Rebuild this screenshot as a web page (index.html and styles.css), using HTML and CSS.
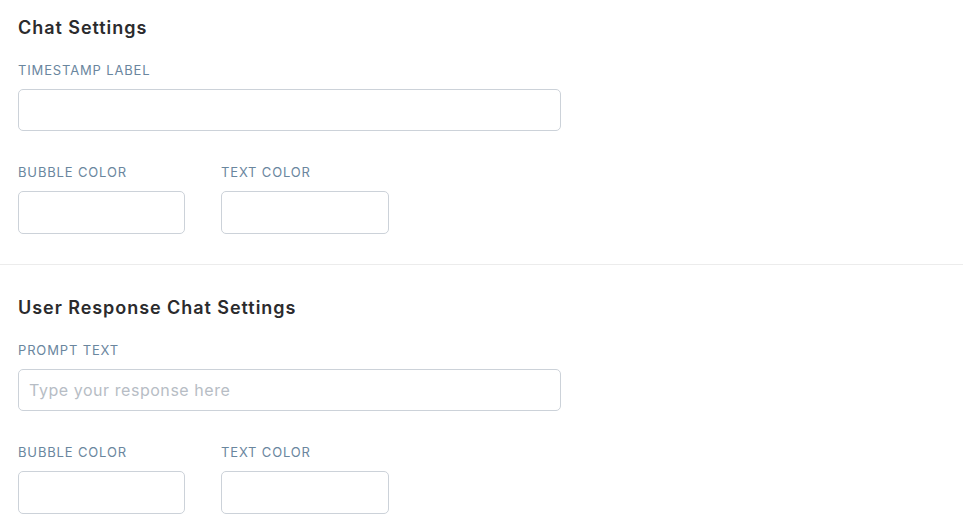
FILE: index.html
```html
<!DOCTYPE html>
<html lang="en">
<head>
    <meta charset="UTF-8">
    <meta name="viewport" content="width=device-width, initial-scale=1.0">
    <title>Chat Settings</title>
    <link rel="stylesheet" href="styles.css">
</head>
<body>
    <div class="settings-section">
        <h2>Chat Settings</h2>

        <div class="form-field">
            <label for="timestampLabel">Timestamp Label</label>
            <input type="text" id="timestampLabel" class="wide-input">
        </div>

        <div class="color-row">
            <div class="form-field">
                <label for="botBubbleColor">Bubble Color</label>
                <input type="text" id="botBubbleColor" class="color-input">
            </div>
            <div class="form-field">
                <label for="botTextColor">Text Color</label>
                <input type="text" id="botTextColor" class="color-input">
            </div>
        </div>
    </div>

    <div class="settings-section">
        <h2>User Response Chat Settings</h2>

        <div class="form-field">
            <label for="promptText">Prompt Text</label>
            <input type="text" id="promptText" class="wide-input" placeholder="Type your response here">
        </div>

        <div class="color-row">
            <div class="form-field">
                <label for="userBubbleColor">Bubble Color</label>
                <input type="text" id="userBubbleColor" class="color-input">
            </div>
            <div class="form-field">
                <label for="userTextColor">Text Color</label>
                <input type="text" id="userTextColor" class="color-input">
            </div>
        </div>
    </div>
</body>
</html>
```

FILE: styles.css
```css
body {
    font-family: Inter, "Open Sans", Arial, sans-serif;
    margin: 0;
    background: #fff;
    color: #333;
}
.settings-section {
    padding: 32px 18px 30px 18px;
    border-bottom: 1px solid #ececec;
}
.settings-section:first-child {
    padding-top: 17px;
}
.settings-section:last-child {
    border-bottom: none;
}
.settings-section h2 {
    margin: 0 0 23px 0;
    font-size: 18px;
    line-height: 22px;
    font-weight: 600;
    letter-spacing: 0.95px;
    color: #2b2b2d;
}
.form-field {
    margin-bottom: 33px;
}
.color-row .form-field,
.form-field:last-child {
    margin-bottom: 0;
}
.form-field label {
    display: block;
    margin-bottom: 11px;
    font-size: 13px;
    line-height: 16px;
    letter-spacing: 0.85px;
    text-transform: uppercase;
    color: #6a869e;
}
.form-field input {
    display: block;
    box-sizing: border-box;
    height: 42px;
    padding: 0 10px;
    border: 1px solid #ccd2d9;
    border-radius: 5px;
    font-family: inherit;
    font-size: 16px;
    letter-spacing: 0.55px;
    color: #333;
}
.form-field input::placeholder {
    color: #b7bdc5;
}
.form-field .wide-input {
    width: 543px;
}
.color-row {
    display: flex;
    gap: 36px;
}
.form-field .color-input {
    width: 168px;
    height: 43px;
}
.color-row .form-field:first-child .color-input {
    width: 167px;
}
```
